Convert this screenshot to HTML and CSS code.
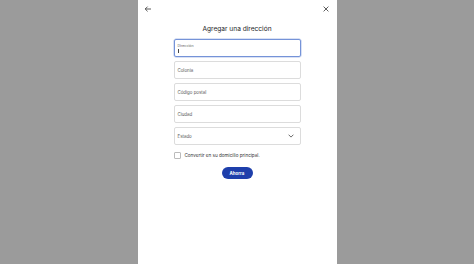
FILE: index.html
```html
<!DOCTYPE html>
<html lang="es">
<head>
<meta charset="utf-8">
<link rel="stylesheet" href="styles.css">
</head>
<body>
<div class="panel">
  <div class="topbar">
    <svg class="icon" width="8" height="8" viewBox="0 0 8 8"><path d="M7 4H1.2M3.6 1.6L1.2 4l2.4 2.4" fill="none" stroke="#333" stroke-width="0.8"/></svg>
    <svg class="icon" width="8" height="8" viewBox="0 0 8 8"><path d="M1.6 1.6l4.8 4.8M6.4 1.6L1.6 6.4" fill="none" stroke="#333" stroke-width="0.8"/></svg>
  </div>
  <h1 class="title">Agregar una dirección</h1>
  <form class="form">
    <div class="field focused">
      <span class="small-label">Dirección</span>
      <span class="caret"></span>
    </div>
    <div class="field"><span class="ph">Colonia</span></div>
    <div class="field"><span class="ph">Código postal</span></div>
    <div class="field"><span class="ph">Ciudad</span></div>
    <div class="field select"><span class="ph">Estado</span>
      <svg width="6" height="4" viewBox="0 0 6 4"><path d="M0.6 0.7L3 3.1 5.4 0.7" fill="none" stroke="#444" stroke-width="0.8"/></svg>
    </div>
    <label class="check"><span class="box"></span><span>Convertir en su domicilio principal.</span></label>
    <div class="actions"><button type="button" class="btn">Ahorra</button></div>
  </form>
</div>
</body>
</html>
```
FILE: styles.css
```css
html, body { margin: 0; padding: 0; }
body {
  background: #9b9b9b;
  font-family: Inter, "Liberation Sans", sans-serif;
  color: #2e2f32;
  height: 264px;
  overflow: hidden;
}
.panel {
  width: 199px;
  height: 264px;
  margin: 0 auto;
  background: #ffffff;
  box-sizing: border-box;
}
.topbar {
  display: flex;
  justify-content: space-between;
  padding: 5px 7px 0 6px;
  height: 8px;
}
.icon { display: block; }
.title {
  margin: 12px 0 0;
  font-size: 6.6px;
  font-weight: 400;
  text-align: center;
  line-height: 9px;
  color: #222326;
}
.form {
  margin: 5px 36px 0;
  display: flex;
  flex-direction: column;
  gap: 4px;
}
.field {
  height: 18px;
  border: 1px solid #dcdcdc;
  border-radius: 2px;
  box-sizing: border-box;
  display: flex;
  align-items: center;
  padding: 0 3px;
  font-size: 4.4px;
  color: #555;
}
.field.focused {
  border: 1px solid #7593d8;
  box-shadow: 0 0 0 0.5px #b3c4ea;
  flex-direction: column;
  align-items: flex-start;
  justify-content: center;
  gap: 1px;
}
.small-label { font-size: 3.6px; color: #666; line-height: 4px; }
.caret { width: 0.6px; height: 4px; background: #444; }
.select { justify-content: space-between; padding-right: 6px; }
.check {
  display: flex;
  align-items: center;
  gap: 4px;
  margin-top: 3px;
  font-size: 4.6px;
  color: #333;
}
.box {
  width: 7px;
  height: 7px;
  border: 0.6px solid #bbb;
  border-radius: 1px;
  box-sizing: border-box;
}
.actions { display: flex; justify-content: center; margin-top: 4px; }
.btn {
  width: 31px;
  height: 12px;
  border: 0;
  border-radius: 6px;
  background: #1e3fab;
  color: #fff;
  font-family: inherit;
  font-size: 4.4px;
  font-weight: 700;
  padding: 0;
}
```
